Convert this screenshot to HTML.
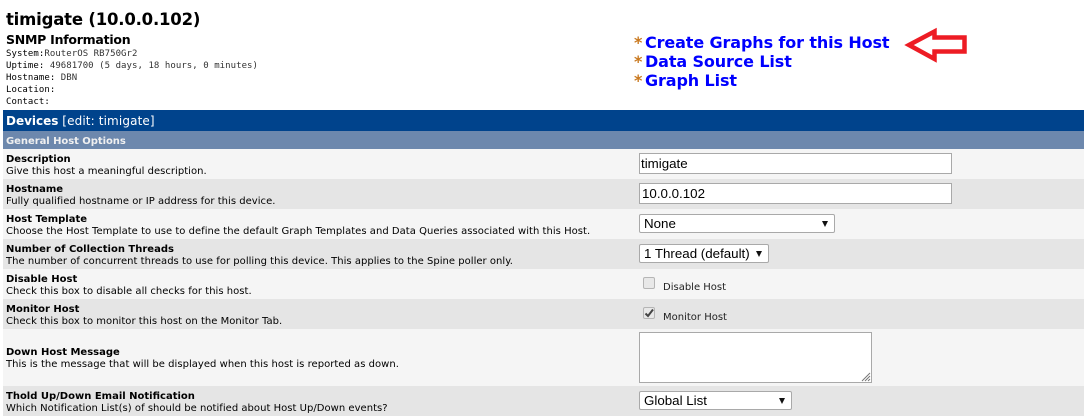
<!DOCTYPE html>
<html><head><meta charset="utf-8"><style>
html,body{margin:0;padding:0;background:#fff;width:1084px;height:416px;overflow:hidden}
body{position:relative;font-family:"DejaVu Sans","Liberation Sans",sans-serif;color:#000}
.a{position:absolute;white-space:nowrap}
.r{position:absolute;left:3px;width:1081px}
.o{background:#f5f5f5}.e{background:#e5e5e5}
.t{position:absolute;left:6px;font-size:10px;line-height:12px;white-space:nowrap;letter-spacing:.025px}
.b{font-weight:bold;font-size:10px;line-height:12px;letter-spacing:0}
.m{position:absolute;left:6px;font-family:"DejaVu Sans Mono","Liberation Mono",monospace;font-size:9px;line-height:12px;white-space:nowrap;color:#333;letter-spacing:.06px}
.m b{color:#000;font-weight:normal}
.l{position:absolute;left:645px;font-size:16px;font-weight:bold;line-height:19px;color:#0000ff;white-space:nowrap;letter-spacing:-.12px}
.s{position:absolute;left:634px;font-size:16px;font-weight:bold;line-height:19px;color:#c9781e}
.in{position:absolute;box-sizing:border-box;background:#fff;border:1px solid #a9a9a9;font-family:"Liberation Sans",sans-serif;font-size:13.33px;color:#000;white-space:nowrap}
.sel{border-radius:2px;padding-left:4px;line-height:17px}
.sel i{position:absolute;top:6px;width:0;height:0;border-left:3px solid transparent;border-right:3px solid transparent;border-top:6px solid #111}
.c{position:absolute;box-sizing:border-box;left:643px;width:12px;height:12px;border:1px solid #b5b5b5;border-radius:2px;background:#e8e8e8}
</style></head><body>
<div class="a" style="left:6px;top:9px;font-size:16.5px;letter-spacing:-.2px;font-weight:bold;line-height:22px">timigate (10.0.0.102)</div>
<div class="a" style="left:6px;top:32px;font-size:12.5px;letter-spacing:-.25px;font-weight:bold;line-height:16px">SNMP Information</div>
<div class="m" style="top:48px"><b>System:</b>RouterOS RB750Gr2</div>
<div class="m" style="top:60px"><b>Uptime:</b> 49681700 (5 days, 18 hours, 0 minutes)</div>
<div class="m" style="top:72px"><b>Hostname:</b> DBN</div>
<div class="m" style="top:84px"><b>Location:</b></div>
<div class="m" style="top:96px"><b>Contact:</b></div>
<div class="s" style="top:33px">*</div><div class="l" style="top:33px">Create Graphs for this Host</div>
<div class="s" style="top:52px">*</div><div class="l" style="top:52px">Data Source List</div>
<div class="s" style="top:71px">*</div><div class="l" style="top:71px">Graph List</div>
<svg class="a" style="left:900px;top:24px" width="72" height="44" viewBox="900 24 72 44"><path d="M909 45 L934.5 31.5 V37.5 H964.5 V51.5 H934.5 V59 Z" fill="#fff" stroke="#ed1c24" stroke-width="4.5" stroke-linejoin="miter"/></svg>
<div class="r" style="top:110px;height:21px;background:#00438c"></div>
<div class="a" style="left:6px;top:114px;font-size:12px;line-height:15px;color:#fff"><b>Devices</b> <span style="letter-spacing:.13px">[edit: timigate]</span></div>
<div class="r" style="top:131px;height:18px;background:#6d88ad"></div>
<div class="a" style="left:6px;top:135px;font-size:10px;letter-spacing:-.05px;font-weight:bold;line-height:13px;color:#f0f0f0">General Host Options</div>
<div class="r o" style="top:149px;height:30px"></div>
<div class="r e" style="top:179px;height:30px"></div>
<div class="r o" style="top:209px;height:30px"></div>
<div class="r e" style="top:239px;height:30px"></div>
<div class="r o" style="top:269px;height:30px"></div>
<div class="r e" style="top:299px;height:30px"></div>
<div class="r o" style="top:329px;height:57px"></div>
<div class="r e" style="top:386px;height:30px"></div>
<div class="t" style="top:154px"><b class="b">Description</b><br>Give this host a meaningful description.</div>
<div class="t" style="top:184px"><b class="b">Hostname</b><br>Fully qualified hostname or IP address for this device.</div>
<div class="t" style="top:214px"><b class="b">Host Template</b><br>Choose the Host Template to use to define the default Graph Templates and Data Queries associated with this Host.</div>
<div class="t" style="top:244px"><b class="b">Number of Collection Threads</b><br>The number of concurrent threads to use for polling this device. This applies to the Spine poller only.</div>
<div class="t" style="top:274px"><b class="b">Disable Host</b><br>Check this box to disable all checks for this host.</div>
<div class="t" style="top:304px"><b class="b">Monitor Host</b><br>Check this box to monitor this host on the Monitor Tab.</div>
<div class="t" style="top:347px"><b class="b">Down Host Message</b><br>This is the message that will be displayed when this host is reported as down.</div>
<div class="t" style="top:391px"><b class="b">Thold Up/Down Email Notification</b><br>Which Notification List(s) of should be notified about Host Up/Down events?</div>
<div class="in" style="left:639px;top:153px;width:313px;height:21px;padding-left:1px;line-height:19px">timigate</div>
<div class="in" style="left:639px;top:183px;width:313px;height:21px;padding-left:2px;line-height:19px">10.0.0.102</div>
<div class="in sel" style="left:639px;top:214px;width:196px;height:19px">None<i style="left:182px"></i></div>
<div class="in sel" style="left:639px;top:244px;width:130px;height:19px">1 Thread (default)<i style="left:116px"></i></div>
<div class="c" style="top:277px"></div>
<div class="a" style="left:663px;top:281px;font-size:10px;line-height:13px;color:#222">Disable Host</div>
<div class="c" style="top:307px"><svg style="position:absolute;left:0;top:0" width="10" height="10" viewBox="0 0 10 10"><path d="M1.5 5.5 L4 8 L9 1.5" fill="none" stroke="#444" stroke-width="2"/></svg></div>
<div class="a" style="left:663px;top:311px;font-size:10px;line-height:13px;color:#222">Monitor Host</div>
<div class="in" style="left:639px;top:332px;width:233px;height:51px"><svg style="position:absolute;right:0;bottom:0" width="10" height="10" viewBox="0 0 10 10"><path d="M1 9 L9 1 M4 9 L9 4 M7 9 L9 7" stroke="#777" stroke-width="1"/></svg></div>
<div class="in sel" style="left:639px;top:391px;width:153px;height:19px">Global List<i style="left:139px"></i></div>
</body></html>
